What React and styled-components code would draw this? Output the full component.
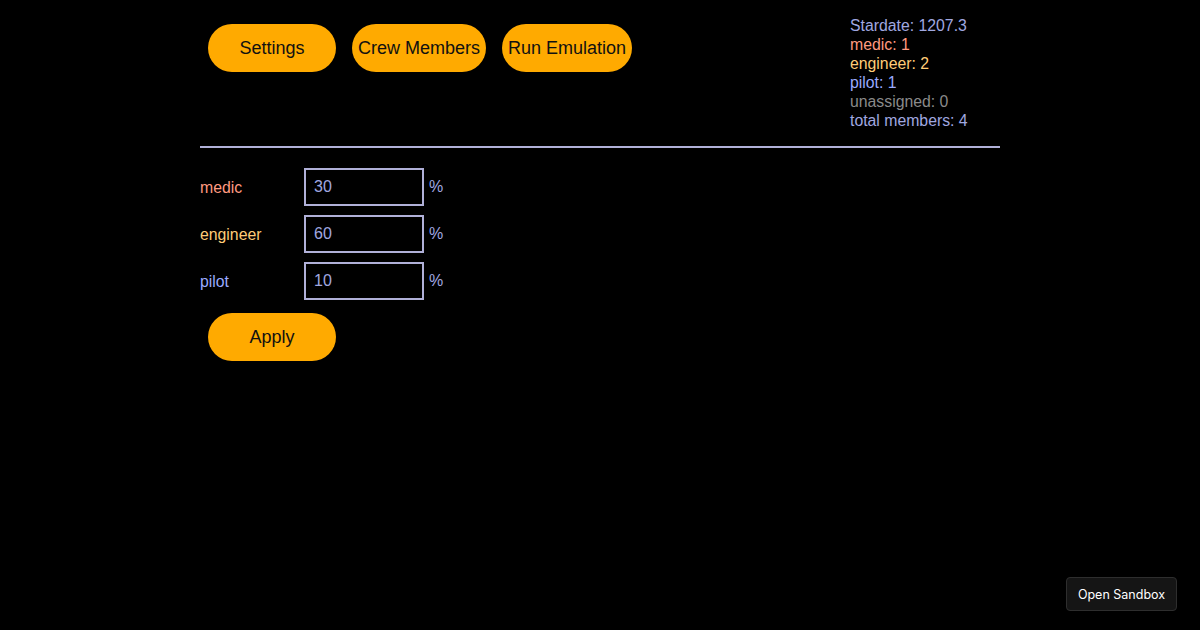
import React, { useState } from "react";
import styled, { createGlobalStyle } from "styled-components";

const Global = createGlobalStyle`
  html, body {
    margin: 0;
    padding: 0;
    background: #000;
    font-family: "Liberation Sans", Arial, sans-serif;
  }
`;

const Page = styled.div`
  width: 800px;
  margin: 0 auto;
  padding-top: 16px;
`;

const Header = styled.div`
  display: flex;
  justify-content: space-between;
  align-items: flex-start;
`;

const Nav = styled.div`
  display: flex;
`;

const Button = styled.button`
  min-width: 128px;
  height: 48px;
  margin: 8px;
  padding: 0 6px;
  border: none;
  border-radius: 24px;
  background: #ffaa00;
  color: #111;
  font-family: "Liberation Sans", Arial, sans-serif;
  font-size: 18px;
  cursor: pointer;
`;

const Stats = styled.div`
  width: 150px;
  font-size: 15.8px;
  line-height: 19px;
`;

const Stat = styled.div`
  color: ${(p) => p.$color};
`;

const Divider = styled.hr`
  border: none;
  height: 2px;
  background: #b0b0d8;
  margin: 16px 0 20px;
`;

const Row = styled.div`
  display: flex;
  align-items: center;
  margin-bottom: 9px;
`;

const Label = styled.label`
  width: 104px;
  font-size: 15.8px;
  padding-top: 2px;
  color: ${(p) => p.$color};
`;

const Input = styled.input`
  box-sizing: border-box;
  width: 120px;
  height: 38px;
  padding: 0 8px;
  background: #000;
  border: 2px solid #b0b0d8;
  color: #a0a8e0;
  font-family: "Liberation Sans", Arial, sans-serif;
  font-size: 16px;
  outline: none;
`;

const Percent = styled.span`
  margin-left: 5px;
  color: #a0a8e0;
  font-size: 16px;
`;

const Actions = styled.div`
  margin-top: -4px;
`;

const SandboxButton = styled.button`
  position: fixed;
  right: 23px;
  bottom: 19px;
  width: 111px;
  height: 34px;
  padding: 0;
  background: #151515;
  border: 1px solid #2e2e2e;
  border-radius: 4px;
  color: #fff;
  font-family: Inter, "Liberation Sans", sans-serif;
  font-size: 12.5px;
`;

const roles = [
  { name: "medic", color: "#ff9a80", value: "30" },
  { name: "engineer", color: "#ffcc77", value: "60" },
  { name: "pilot", color: "#99aaff", value: "10" },
];

export default function App() {
  const [values, setValues] = useState(roles.map((r) => r.value));

  return (
    <>
      <Global />
      <Page>
        <Header>
          <Nav>
            <Button>Settings</Button>
            <Button>Crew Members</Button>
            <Button>Run Emulation</Button>
          </Nav>
          <Stats>
            <Stat $color="#a0a8e0">Stardate: 1207.3</Stat>
            <Stat $color="#ff9a80">medic: 1</Stat>
            <Stat $color="#ffcc77">engineer: 2</Stat>
            <Stat $color="#99aaff">pilot: 1</Stat>
            <Stat $color="#8a8a8a">unassigned: 0</Stat>
            <Stat $color="#a0a8e0">total members: 4</Stat>
          </Stats>
        </Header>
        <Divider />
        {roles.map((r, i) => (
          <Row key={r.name}>
            <Label $color={r.color} htmlFor={r.name}>{r.name}</Label>
            <Input
              id={r.name}
              value={values[i]}
              onChange={(e) => {
                const next = [...values];
                next[i] = e.target.value;
                setValues(next);
              }}
            />
            <Percent>%</Percent>
          </Row>
        ))}
        <Actions>
          <Button>Apply</Button>
        </Actions>
      </Page>
      <SandboxButton>Open Sandbox</SandboxButton>
    </>
  );
}
